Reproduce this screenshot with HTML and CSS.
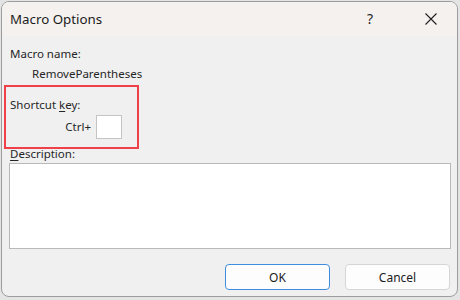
FILE: index.html
```html
<!DOCTYPE html>
<html>
<head>
<meta charset="utf-8">
<link rel="stylesheet" href="styles.css">
</head>
<body>
<div class="window">
  <div class="titlebar">
    <span class="title">Macro Options</span>
    <span class="help">?</span>
    <svg class="close" width="14" height="14" viewBox="0 0 14 14"><path d="M1.5 1.5 L12.5 12.5 M12.5 1.5 L1.5 12.5" stroke="#1f1f1f" stroke-width="1.1" fill="none"/></svg>
  </div>
  <div class="content">
    <div class="label">Macro name:</div>
    <div class="macro">RemoveParentheses</div>
    <div class="label shortcut">Shortcut <u>k</u>ey:</div>
    <div class="ctrlrow">
      <span class="ctrl">Ctrl+</span>
      <span class="keybox"></span>
    </div>
    <div class="label desc"><u>D</u>escription:</div>
    <div class="textarea"></div>
    <div class="buttons">
      <button class="btn ok">OK</button>
      <button class="btn">Cancel</button>
    </div>
    <div class="highlight"></div>
  </div>
</div>
</body>
</html>
```
FILE: styles.css
```css
html, body {
  margin: 0;
  padding: 0;
  background: #e4e4e4;
  width: 460px;
  height: 300px;
  overflow: hidden;
}
body {
  font-family: "Noto Sans", "Open Sans", sans-serif;
  color: #262626;
}
.window {
  margin: 1px 0 0 1px;
  width: 457px;
  height: 296px;
  box-sizing: border-box;
  border: 1px solid #9c9c9c;
  border-radius: 8px;
  overflow: hidden;
  background: #f0f0f0;
  display: flex;
  flex-direction: column;
}
.titlebar {
  height: 34px;
  flex: none;
  background: #f5f1ef;
  display: flex;
  align-items: center;
  padding-left: 8px;
}
.title {
  font-size: 13.3px;
  flex: 1;
  color: #1b1b1b;
  margin-top: -1px;
}
.help {
  font-size: 14px;
  width: 12px;
  margin-right: 45px;
  margin-top: -1px;
}
.close {
  margin-right: 19px;
}
.content {
  position: relative;
  flex: 1;
  padding: 10px 7px 0 8px;
  font-size: 11.5px;
  line-height: 16px;
}
.label u {
  text-decoration-thickness: 1px;
  text-underline-offset: 2px;
}
.macro {
  margin-top: 4px;
  padding-left: 22px;
}
.shortcut {
  margin-top: 15px;
}
.ctrlrow {
  margin-top: 2px;
  display: flex;
  align-items: center;
  gap: 5px;
}
.ctrl {
  width: 81px;
  text-align: right;
}
.keybox {
  width: 24px;
  height: 22px;
  background: #fff;
  border: 1px solid #c4c4c4;
}
.desc {
  margin-top: 7px;
}
.textarea {
  margin: 1px 0 0 -1px;
  height: 84px;
  width: 440px;
  background: #fff;
  border: 1px solid #b9b9b9;
}
.buttons {
  margin-top: 15px;
  display: flex;
  justify-content: flex-end;
  gap: 15px;
}
.btn {
  width: 105px;
  height: 26px;
  box-sizing: border-box;
  font-family: inherit;
  font-size: 12px;
  color: #1c1c1c;
  background: #fdfdfd;
  border: 1px solid #d6d6d6;
  border-radius: 4px;
  padding: 0;
}
.btn.ok {
  border: 1px solid #3d8ee0;
}
.highlight {
  position: absolute;
  left: 2px;
  top: 49px;
  width: 135px;
  height: 64px;
  box-sizing: border-box;
  border: 2px solid #f0404a;
}
```
